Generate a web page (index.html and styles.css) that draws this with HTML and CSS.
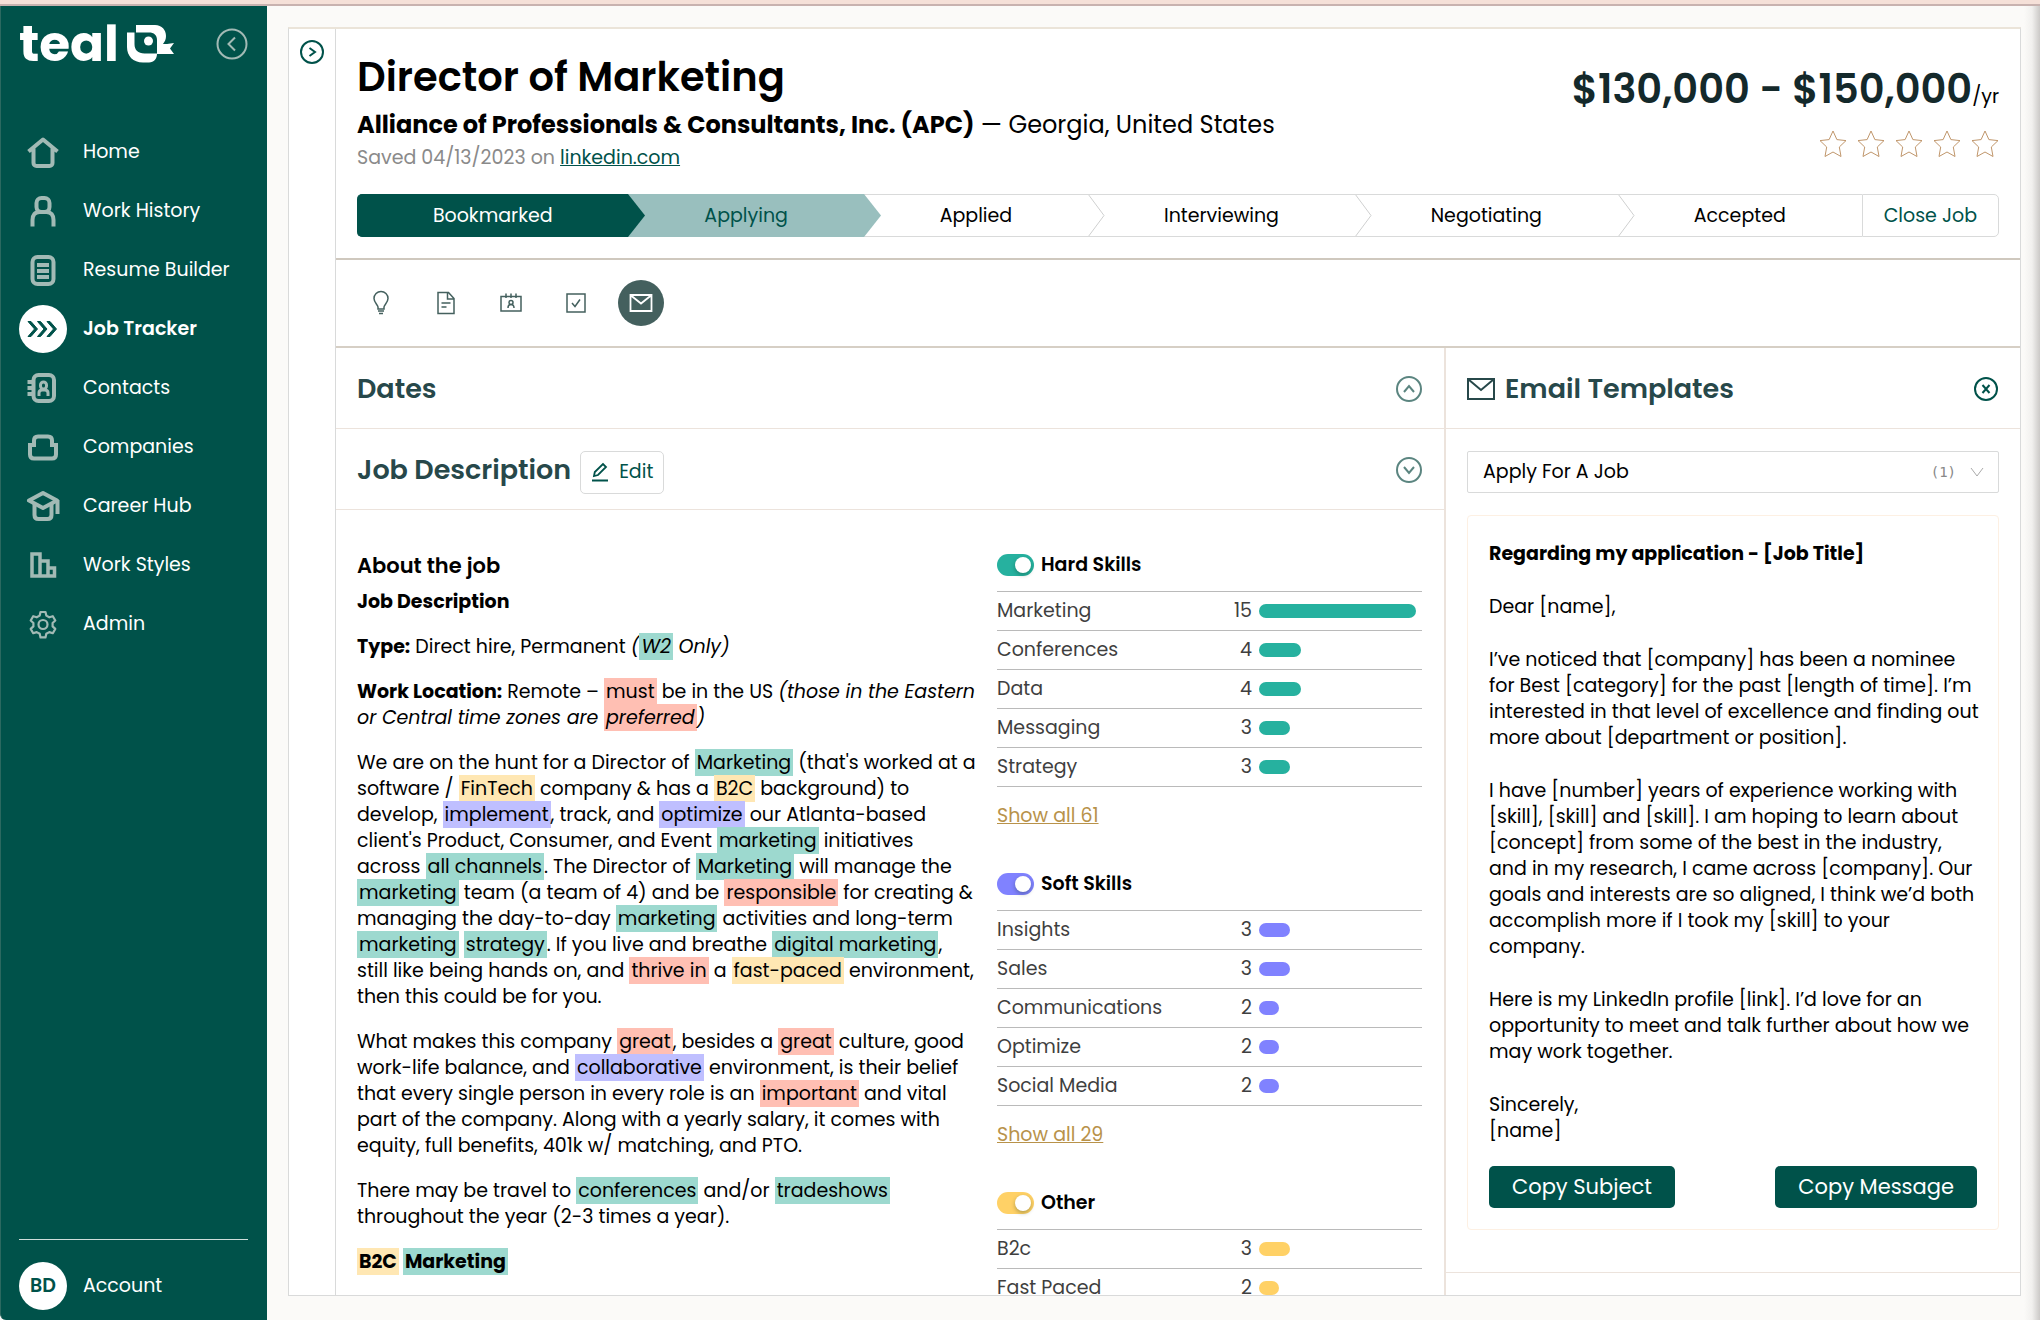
FILE: index.html
```html
<!DOCTYPE html>
<html lang="en">
<head>
    <meta charset="UTF-8">
    <meta name="viewport" content="width=device-width, initial-scale=1.0">
    <title>Teal - Job Tracker</title>
    <link rel="stylesheet" href="styles.css">
</head>
<body>
    <div class="top-bar"></div>
    <div class="app">
        <!-- Sidebar -->
        <aside class="sidebar">
            <div class="brand">
                <a href="#" class="logo">
                    <span>teal</span>
                    <svg width="48" height="38" viewBox="0 0 48 38" fill="none">
                        <path fill="#fff" d="M9 0h19c7 0 11 5 11 11 0 3-1 5.500-3 8h4l7-1-4 5.500 4 5.500H30V15c0-5-3-7.500-8-7.500H9z"/>
                        <path fill="#fff" d="M0 7.500h7.500V19c0 6 3.500 9.500 10 9.500H30c0 5.500-3 9-8 9h-6C6 37.500 0 31 0 22z"/>
                        <circle cx="21.500" cy="16" r="4.500" fill="#fff"/>
                    </svg>
                </a>
                <button class="collapse-btn" aria-label="Collapse menu">
                    <svg width="32" height="32" viewBox="0 0 32 32" fill="none" stroke="currentColor" stroke-width="2"><circle cx="16" cy="16" r="14.500"/><path d="M19 9.500 12.500 16l6.500 6.500"/></svg>
                </button>
            </div>
            <nav class="menu">
                <a href="#" class="menu-item">
                    <span class="menu-icon"><svg width="34" height="34" viewBox="0 0 34 34" fill="none" stroke="currentColor" stroke-width="4"><path d="M2.500 16.500 17 4.500l14.500 12M7.500 13v15a3 3 0 0 0 3 3h13a3 3 0 0 0 3-3V13" stroke-linejoin="round"/></svg></span>
                    Home
                </a>
                <a href="#" class="menu-item">
                    <span class="menu-icon"><svg width="34" height="34" viewBox="0 0 34 34" fill="none" stroke="currentColor" stroke-width="4"><rect x="10.500" y="4" width="13" height="14" rx="5"/><path d="M6.500 32.500V26c0-5 2.500-8 7-8h7c4.500 0 7 3 7 8v6.500"/></svg></span>
                    Work History
                </a>
                <a href="#" class="menu-item">
                    <span class="menu-icon"><svg width="34" height="34" viewBox="0 0 34 34" fill="none" stroke="currentColor" stroke-width="4"><rect x="6.500" y="4" width="21" height="27" rx="5"/><path d="M11 12h12M11 18h12M11 24h12"/></svg></span>
                    Resume Builder
                </a>
                <a href="#" class="menu-item active">
                    <span class="menu-icon"><svg width="34" height="34" viewBox="0 0 34 34" fill="none" stroke="currentColor" stroke-width="3"><path d="M2 9.500h3l6.500 7.500L5 24.500H2L8.500 17zM11.500 9.500h3L21 17l-6.500 7.500h-3L18 17zM21 9.500h3l6.500 7.500-6.500 7.500h-3l6.500-7.500z" fill="currentColor" stroke-width="1"/></svg></span>
                    Job Tracker
                </a>
                <a href="#" class="menu-item">
                    <span class="menu-icon"><svg width="34" height="34" viewBox="0 0 34 34" fill="none" stroke="currentColor" stroke-width="4"><rect x="7.500" y="4" width="20.500" height="26" rx="5"/><path d="M1.500 11h5M1.500 17h5M1.500 23h5"/><path stroke-width="3" d="M13 25v-3c0-2 1.500-3 3-3h3c1.500 0 3 1 3 3v3"/><rect x="14.500" y="11" width="6" height="7" rx="3" stroke-width="3"/></svg></span>
                    Contacts
                </a>
                <a href="#" class="menu-item">
                    <span class="menu-icon"><svg width="34" height="34" viewBox="0 0 34 34" fill="none" stroke="currentColor" stroke-width="4"><path d="M8 14v-3.500C8 8 9.500 6.500 12 6.500h10c2.500 0 4 1.500 4 4V14"/><path d="M10 15H4v9.500c0 2.500 1.500 4 4 4h18c2.500 0 4-1.500 4-4V15h-6"/></svg></span>
                    Companies
                </a>
                <a href="#" class="menu-item">
                    <span class="menu-icon"><svg width="34" height="34" viewBox="0 0 34 34" fill="none" stroke="currentColor" stroke-width="4" stroke-linejoin="round"><path d="M3 11.500 17 4l14 7.500L17 19z"/><path d="M8.500 15v11c0 2.500 1.500 4 4 4h9c2.500 0 4-1.500 4-4V15M31.500 11v14"/></svg></span>
                    Career Hub
                </a>
                <a href="#" class="menu-item">
                    <span class="menu-icon"><svg width="34" height="34" viewBox="0 0 34 34" fill="none" stroke="currentColor" stroke-width="3.500"><path d="M6 6h8v22H6zM14 13h8v15h-8zM22 20h6.500v8H22z"/></svg></span>
                    Work Styles
                </a>
                <a href="#" class="menu-item">
                    <span class="menu-icon"><svg width="34" height="34" viewBox="0 0 34 34" fill="none" stroke="currentColor" stroke-width="2.200" stroke-linejoin="round"><path d="M14.500 5h5l.8 3.600 3 1.700 3.500-1.100 2.500 4.300-2.700 2.500v3.400l2.700 2.500-2.500 4.300-3.500-1.100-3 1.700-.8 3.600h-5l-.8-3.600-3-1.700-3.500 1.100-2.500-4.300 2.700-2.500V16l-2.700-2.500 2.500-4.300 3.500 1.100 3-1.700z"/><circle cx="17" cy="17.500" r="4.500"/></svg></span>
                    Admin
                </a>
            </nav>
            <a href="#" class="account">
                <span class="avatar">BD</span>
                Account
            </a>
        </aside>

        <!-- Job detail -->
        <main class="content">
            <div class="rail">
                <button class="icon-btn" aria-label="Expand job list">
                    <svg width="26" height="26" viewBox="0 0 26 26" fill="none" stroke="currentColor" stroke-width="2"><circle cx="13" cy="13" r="11"/><path d="m10.500 9 5.500 4-5.500 4"/></svg>
                </button>
            </div>
            <div class="job">
                <header class="job-header">
                    <div class="job-top">
                        <div>
                            <h1>Director of Marketing</h1>
                            <p class="company"><strong>Alliance of Professionals &amp; Consultants, Inc. (APC)</strong> — Georgia, United States</p>
                            <p class="saved">Saved 04/13/2023 on <a href="#">linkedin.com</a></p>
                        </div>
                        <div class="job-side">
                            <p class="salary"><strong>$130,000 - $150,000</strong><span>/yr</span></p>
                            <div class="stars">
                                <button aria-label="1 star"><svg width="28" height="28" viewBox="0 0 28 28"><path d="m14 1 3.900 8.600 9.100 1-6.700 6.400 1.700 9.500L14 22l-8 4.500L7.700 17 1 10.600l9.100-1z"/></svg></button>
                                <button aria-label="2 stars"><svg width="28" height="28" viewBox="0 0 28 28"><path d="m14 1 3.900 8.600 9.100 1-6.700 6.400 1.700 9.500L14 22l-8 4.500L7.700 17 1 10.600l9.100-1z"/></svg></button>
                                <button aria-label="3 stars"><svg width="28" height="28" viewBox="0 0 28 28"><path d="m14 1 3.900 8.600 9.100 1-6.700 6.400 1.700 9.500L14 22l-8 4.500L7.700 17 1 10.600l9.100-1z"/></svg></button>
                                <button aria-label="4 stars"><svg width="28" height="28" viewBox="0 0 28 28"><path d="m14 1 3.900 8.600 9.100 1-6.700 6.400 1.700 9.500L14 22l-8 4.500L7.700 17 1 10.600l9.100-1z"/></svg></button>
                                <button aria-label="5 stars"><svg width="28" height="28" viewBox="0 0 28 28"><path d="m14 1 3.900 8.600 9.100 1-6.700 6.400 1.700 9.500L14 22l-8 4.500L7.700 17 1 10.600l9.100-1z"/></svg></button>
                            </div>
                        </div>
                    </div>
                    <div class="stages">
                        <button class="stage done">Bookmarked<svg class="arrow" viewBox="0 0 17 43" preserveAspectRatio="none"><path d="M0 0 17 21.500 0 43z"/></svg></button>
                        <button class="stage current">Applying<svg class="arrow" viewBox="0 0 17 43" preserveAspectRatio="none"><path d="M0 0 17 21.500 0 43z"/></svg></button>
                        <button class="stage">Applied<svg class="arrow" viewBox="0 0 17 43" preserveAspectRatio="none"><path d="M0 0 16 21.500 0 43"/></svg></button>
                        <button class="stage">Interviewing<svg class="arrow" viewBox="0 0 17 43" preserveAspectRatio="none"><path d="M0 0 16 21.500 0 43"/></svg></button>
                        <button class="stage">Negotiating<svg class="arrow" viewBox="0 0 17 43" preserveAspectRatio="none"><path d="M0 0 16 21.500 0 43"/></svg></button>
                        <button class="stage">Accepted</button>
                        <button class="close-job">Close Job</button>
                    </div>
                </header>

                <div class="toolbar">
                    <button aria-label="Tips"><svg width="26" height="26" viewBox="0 0 26 26" fill="none" stroke="currentColor" stroke-width="1.500"><path d="M10 19v-2c0-2-4-4.500-4-8.500a7 7 0 0 1 14 0c0 4-4 6.500-4 8.500v2zM10 21h6M11 23.500h4"/></svg></button>
                    <button aria-label="Notes"><svg width="26" height="26" viewBox="0 0 26 26" fill="none" stroke="currentColor" stroke-width="1.500"><path d="M5 2.500h10.500l5.500 6V23.500H5zM14.500 2.500v6.500H21M8.500 13h9M8.500 17h5"/></svg></button>
                    <button aria-label="Contacts"><svg width="26" height="26" viewBox="0 0 26 26" fill="none" stroke="currentColor" stroke-width="1.500"><path d="M3 6.500h20v14.500H3zM8 3.500v4.500M13 3.500v4.500M18 3.500v4.500M10 18c0-3 1-3.500 3-3.500s3 .5 3 3.500"/><circle cx="13" cy="12.500" r="2"/></svg></button>
                    <button aria-label="Tasks"><svg width="26" height="26" viewBox="0 0 26 26" fill="none" stroke="currentColor" stroke-width="1.500"><path d="M4 4h18v18H4zM9 13l3 3.500L17 9.500"/></svg></button>
                    <button class="active" aria-label="Email templates"><svg width="26" height="26" viewBox="0 0 26 26" fill="none" stroke="currentColor" stroke-width="1.800"><path d="M2.500 5h21v16h-21zM3 5.500l10 8 10-8"/></svg></button>
                </div>

                <div class="panels">
                    <div class="details">
                        <section class="section-head">
                            <h2>Dates</h2>
                            <button class="icon-btn muted" aria-label="Expand dates">
                                <svg width="28" height="28" viewBox="0 0 28 28" fill="none" stroke="currentColor" stroke-width="2"><circle cx="14" cy="14" r="12"/><path d="m9 17 5-6 5 6"/></svg>
                            </button>
                        </section>
                        <section class="section-head">
                            <h2>Job Description</h2>
                            <button class="edit-btn">
                                <svg width="18" height="20" viewBox="0 0 18 20" fill="none" stroke="currentColor" stroke-width="1.800"><path d="M1 18.500h16M3 14l.8-4L12 2l3 3-8 8z"/></svg>
                                Edit
                            </button>
                            <button class="icon-btn muted" aria-label="Collapse job description">
                                <svg width="28" height="28" viewBox="0 0 28 28" fill="none" stroke="currentColor" stroke-width="2"><circle cx="14" cy="14" r="12"/><path d="m9 11 5 6 5-6"/></svg>
                            </button>
                        </section>
                        <div class="description">
                            <article class="posting">
                                <h3>About the job</h3>
                                <p class="lead"><strong>Job Description</strong></p>
                                <p><strong>Type:</strong> Direct hire, Permanent <em>(<mark class="hard">W2</mark> Only)</em></p>
                                <p><strong>Work Location:</strong> Remote – <mark class="key">must</mark> be in the US <em>(those in the Eastern or Central time zones are <mark class="key">preferred</mark>)</em></p>
                                <p>We are on the hunt for a Director of <mark class="hard">Marketing</mark> (that's worked at a software / <mark class="other">FinTech</mark> company &amp; has a <mark class="other">B2C</mark> background) to develop, <mark class="soft">implement</mark>, track, and <mark class="soft">optimize</mark> our Atlanta-based client's Product, Consumer, and Event <mark class="hard">marketing</mark> initiatives across <mark class="hard">all channels</mark>. The Director of <mark class="hard">Marketing</mark> will manage the <mark class="hard">marketing</mark> team (a team of 4) and be <mark class="key">responsible</mark> for creating &amp; managing the day-to-day <mark class="hard">marketing</mark> activities and long-term <mark class="hard">marketing</mark> <mark class="hard">strategy</mark>. If you live and breathe <mark class="hard">digital marketing</mark>, still like being hands on, and <mark class="key">thrive in</mark> a <mark class="other">fast-paced</mark> environment, then this could be for you.</p>
                                <p>What makes this company <mark class="key">great</mark>, besides a <mark class="key">great</mark> culture, good work-life balance, and <mark class="soft">collaborative</mark> environment, is their belief that every single person in every role is an <mark class="key">important</mark> and vital part of the company. Along with a yearly salary, it comes with equity, full benefits, 401k w/ matching, and PTO.</p>
                                <p>There may be travel to <mark class="hard">conferences</mark> and/or <mark class="hard">tradeshows</mark> throughout the year (2-3 times a year).</p>
                                <p><strong><mark class="other">B2C</mark> <mark class="hard">Marketing</mark></strong></p>
                            </article>

                            <div class="skills">
                                <section class="skill-group hard">
                                    <label><input type="checkbox" class="switch" checked> Hard Skills</label>
                                    <table>
                                        <tr><td>Marketing</td><td class="count">15</td><td class="bar-cell"><div class="bar" style="width: 100%"></div></td></tr>
                                        <tr><td>Conferences</td><td class="count">4</td><td class="bar-cell"><div class="bar" style="width: 27%"></div></td></tr>
                                        <tr><td>Data</td><td class="count">4</td><td class="bar-cell"><div class="bar" style="width: 27%"></div></td></tr>
                                        <tr><td>Messaging</td><td class="count">3</td><td class="bar-cell"><div class="bar" style="width: 20%"></div></td></tr>
                                        <tr><td>Strategy</td><td class="count">3</td><td class="bar-cell"><div class="bar" style="width: 20%"></div></td></tr>
                                    </table>
                                    <a href="#">Show all 61</a>
                                </section>
                                <section class="skill-group soft">
                                    <label><input type="checkbox" class="switch" checked> Soft Skills</label>
                                    <table>
                                        <tr><td>Insights</td><td class="count">3</td><td class="bar-cell"><div class="bar" style="width: 20%"></div></td></tr>
                                        <tr><td>Sales</td><td class="count">3</td><td class="bar-cell"><div class="bar" style="width: 20%"></div></td></tr>
                                        <tr><td>Communications</td><td class="count">2</td><td class="bar-cell"><div class="bar" style="width: 13%"></div></td></tr>
                                        <tr><td>Optimize</td><td class="count">2</td><td class="bar-cell"><div class="bar" style="width: 13%"></div></td></tr>
                                        <tr><td>Social Media</td><td class="count">2</td><td class="bar-cell"><div class="bar" style="width: 13%"></div></td></tr>
                                    </table>
                                    <a href="#">Show all 29</a>
                                </section>
                                <section class="skill-group other">
                                    <label><input type="checkbox" class="switch" checked> Other</label>
                                    <table>
                                        <tr><td>B2c</td><td class="count">3</td><td class="bar-cell"><div class="bar" style="width: 20%"></div></td></tr>
                                        <tr><td>Fast Paced</td><td class="count">2</td><td class="bar-cell"><div class="bar" style="width: 13%"></div></td></tr>
                                    </table>
                                </section>
                            </div>
                        </div>
                    </div>

                    <!-- Email templates -->
                    <div class="email">
                        <div class="section-head">
                            <svg class="mail-icon" width="28" height="22" viewBox="0 0 28 22" fill="none" stroke="currentColor" stroke-width="2"><path d="M1 1h26v20H1zM1.500 1.500 14 12 26.500 1.500"/></svg>
                            <h2>Email Templates</h2>
                            <button class="icon-btn" aria-label="Close email templates">
                                <svg width="26" height="26" viewBox="0 0 26 26" fill="none" stroke="currentColor" stroke-width="2"><circle cx="13" cy="13" r="11"/><path d="m9.500 9 7 8M16.500 9l-7 8"/></svg>
                            </button>
                        </div>
                        <div class="email-body">
                            <div class="template-select">
                                <select aria-label="Email template">
                                    <option>Apply For A Job</option>
                                </select>
                                <span class="template-count">(1) <svg width="14" height="10" viewBox="0 0 14 10" fill="none" stroke="#aaa"><path d="m1 1 6 8 6-8"/></svg></span>
                            </div>
                            <div class="template">
                                <p><strong>Regarding my application - [Job Title]</strong></p>
                                <p>Dear [name],</p>
                                <p>I’ve noticed that [company] has been a nominee for Best [category] for the past [length of time]. I’m interested in that level of excellence and finding out more about [department or position].</p>
                                <p>I have [number] years of experience working with [skill], [skill] and [skill]. I am hoping to learn about [concept] from some of the best in the industry, and in my research, I came across [company]. Our goals and interests are so aligned, I think we’d both accomplish more if I took my [skill] to your company.</p>
                                <p>Here is my LinkedIn profile [link]. I’d love for an opportunity to meet and talk further about how we may work together.</p>
                                <p>Sincerely,<br>[name]</p>
                                <div class="template-actions">
                                    <button>Copy Subject</button>
                                    <button>Copy Message</button>
                                </div>
                            </div>
                        </div>
                    </div>
                </div>
            </div>
        </main>
    </div>
</body>
</html>
```
FILE: styles.css
```css
* {
    box-sizing: border-box;
}
body {
    margin: 0;
    height: 100vh;
    display: flex;
    flex-direction: column;
    overflow: hidden;
    font-family: Poppins, Inter, "Open Sans", sans-serif;
    font-size: 19px;
    line-height: 26px;
    color: #000;
    background-color: #fbfaf8;
}
h1, h2, h3, p {
    margin: 0;
}
button {
    font: inherit;
    color: #00524a;
    background: none;
    border: none;
    padding: 0;
    cursor: pointer;
}
svg {
    display: block;
    flex: none;
}
.top-bar {
    flex: none;
    height: 6px;
    background-color: #f5e0d8;
    border-bottom: 2px solid #c8b2af;
}
.app {
    flex: 1;
    min-height: 0;
    display: flex;
    background: linear-gradient(to left, #cbc9c7, #f1f0ee 8px, #fbfaf8 16px);
}

/* Sidebar */
.sidebar {
    flex: none;
    width: 267px;
    display: flex;
    flex-direction: column;
    padding: 18px 19px 11px 18px;
    background-color: #00524a;
    border-left: 1px solid #2b6960;
    border-bottom-left-radius: 6px;
}
.brand {
    display: flex;
    justify-content: space-between;
    align-items: center;
    height: 40px;
}
.logo {
    display: flex;
    align-items: center;
    gap: 8px;
    color: #fff;
    font-size: 50px;
    font-weight: 700;
    line-height: 40px;
    text-decoration: none;
}
.collapse-btn {
    color: #a2bab5;
}
.menu {
    display: flex;
    flex-direction: column;
    gap: 11px;
    margin-top: 64px;
}
.menu-item, .account {
    display: flex;
    align-items: center;
    gap: 16px;
    height: 48px;
    color: #fff;
    text-decoration: none;
}
.menu-icon {
    width: 48px;
    height: 48px;
    display: flex;
    align-items: center;
    justify-content: center;
    color: #a2bab5;
}
.menu-item.active {
    font-weight: 600;
}
.menu-item.active .menu-icon {
    border-radius: 50%;
    background-color: #fff;
    color: #00524a;
}
.account {
    margin-top: auto;
    height: 70px;
    padding-top: 22px;
    border-top: 1px solid #cfdedb;
}
.avatar {
    width: 48px;
    height: 48px;
    border-radius: 50%;
    background-color: #fff;
    color: #00524a;
    font-weight: 600;
    line-height: 48px;
    text-align: center;
}

/* Job card */
.content {
    flex: 1;
    min-width: 0;
    display: flex;
    margin: 21px 19px 24px 21px;
    background-color: #fff;
    border: 1px solid #d9dada;
    border-top: 2px solid #ebe4d9;
}
.rail {
    flex: none;
    width: 47px;
    padding: 10px 0;
    border-right: 1px solid #d9dada;
}
.rail .icon-btn {
    margin: 0 auto;
}
.icon-btn {
    display: block;
    color: #00524a;
}
.icon-btn.muted {
    color: #5b8580;
}
.job {
    flex: 1;
    min-width: 0;
    display: flex;
    flex-direction: column;
}
.job-header {
    padding: 21px;
    border-bottom: 2px solid #cfc8be;
}
.job-top {
    display: flex;
    justify-content: space-between;
}
h1 {
    font-size: 40px;
    font-weight: 600;
    line-height: 54px;
}
.company {
    margin-top: 5px;
    font-size: 24px;
    line-height: 32px;
}
.saved {
    margin-top: 2px;
    line-height: 30px;
    color: #8a8a8a;
}
.saved a {
    color: #00524a;
}
.job-side {
    display: flex;
    flex-direction: column;
    align-items: flex-end;
    padding-top: 12px;
}
.salary {
    line-height: 54px;
}
.salary strong {
    font-size: 40px;
    font-weight: 600;
    color: #14292b;
}
.stars {
    display: flex;
    gap: 10px;
    margin-top: 6px;
}
.stars svg {
    fill: none;
    stroke: #c0966b;
}
.stages {
    display: flex;
    height: 43px;
    margin-top: 21px;
}
.stage, .close-job {
    position: relative;
    color: #000;
    border: solid #d9dada;
    border-width: 1px 0;
}
.stage {
    flex: 1 1 auto;
}
.stage.done {
    z-index: 2;
    color: #fff;
    background-color: #00524a;
    border-color: #00524a;
    border-radius: 5px 0 0 5px;
}
.stage.current {
    z-index: 1;
    color: #00524a;
    background-color: #99bfbe;
    border-color: #99bfbe;
}
.arrow {
    position: absolute;
    top: -1px;
    right: -17px;
    width: 17px;
    height: 43px;
    fill: #fff;
    stroke: #cfd0d0;
}
.done .arrow {
    fill: #00524a;
    stroke: none;
}
.current .arrow {
    fill: #99bfbe;
    stroke: none;
}
.close-job {
    padding: 0 21px;
    color: #00524a;
    border-width: 1px;
    border-radius: 0 5px 5px 0;
}
.toolbar {
    display: flex;
    align-items: center;
    gap: 19px;
    height: 88px;
    padding-left: 22px;
    border-bottom: 2px solid #d6cfc5;
}
.toolbar button {
    width: 46px;
    height: 46px;
    display: flex;
    align-items: center;
    justify-content: center;
    border-radius: 50%;
    color: #44605e;
}
.toolbar .active {
    color: #fff;
    background-color: #44605e;
}

/* Panels under the toolbar */
.panels {
    flex: 1;
    min-height: 0;
    display: flex;
}
.details {
    flex: 1;
    min-width: 0;
    overflow: hidden;
}
.section-head {
    display: flex;
    align-items: center;
    height: 81px;
    padding: 2px 21px 0;
    border-bottom: 1px solid #ece3dc;
}
h2 {
    font-size: 27px;
    font-weight: 600;
    line-height: 40px;
    color: #27484a;
}
.section-head .icon-btn {
    margin-left: auto;
}
.edit-btn {
    display: flex;
    align-items: center;
    gap: 10px;
    height: 43px;
    margin: 4px 0 0 9px;
    padding: 0 10px;
    border: 1px solid #d9dada;
    border-radius: 5px;
}
.description {
    display: flex;
    justify-content: space-between;
    gap: 20px;
    padding: 43px 22px 0 21px;
}
.posting {
    flex: 1;
    min-width: 0;
}
.posting p {
    margin-bottom: 19px;
}
h3 {
    font-size: 21px;
    font-weight: 600;
    line-height: 26px;
}
.posting .lead {
    margin-top: 10px;
}
mark {
    padding: 0 2px;
    color: inherit;
}
mark.hard {
    background-color: #9dd9cf;
}
mark.soft {
    background-color: #bfbfff;
}
mark.other {
    background-color: #ffe7b3;
}
mark.key {
    background-color: #ffbfb3;
}
.skills {
    flex: none;
    width: 425px;
    margin-top: -1px;
}
.skill-group {
    margin-bottom: 42px;
    --tone: #26b19f;
}
.skill-group.soft {
    --tone: #8082ff;
}
.skill-group.other {
    --tone: #ffd166;
}
.skill-group label {
    display: flex;
    align-items: center;
    gap: 7px;
    font-weight: 600;
}
.switch {
    appearance: none;
    width: 37px;
    height: 22px;
    margin: 0;
    padding: 3px;
    border-radius: 11px;
    background-color: var(--tone);
}
.switch::before {
    content: "";
    display: block;
    width: 16px;
    height: 16px;
    margin-left: auto;
    border-radius: 50%;
    background-color: #fff;
    box-shadow: 0 2px 4px rgba(0, 35, 11, 0.3);
}
.skill-group table {
    width: 100%;
    margin: 13px 0 16px;
    border-collapse: collapse;
    color: #3f3f3f;
}
.skill-group td {
    height: 39px;
    padding: 0;
    border-top: 1px solid #bababa;
    border-bottom: 1px solid #bababa;
}
.skill-group .count {
    width: 60px;
    text-align: right;
}
.skill-group .bar-cell {
    width: 170px;
    padding: 0 6px 0 7px;
}
.bar {
    height: 14px;
    border-radius: 7px;
    background-color: var(--tone);
}
.skill-group a {
    color: #b8924a;
}

/* Email panel */
.email {
    flex: none;
    width: 576px;
    border-left: 2px solid #ece3dc;
}
.email h2 {
    margin-left: 10px;
}
.mail-icon {
    color: #27484a;
}
.email-body {
    padding: 22px 21px 42px;
    border-bottom: 1px solid #ece3dc;
}
.template-select {
    position: relative;
}
.template-select select {
    display: block;
    width: 100%;
    height: 42px;
    padding: 0 15px;
    appearance: none;
    font: inherit;
    color: #000;
    background-color: #fff;
    border: 1px solid #d9dada;
    border-radius: 2px;
}
.template-count {
    position: absolute;
    top: 8px;
    right: 15px;
    display: flex;
    align-items: center;
    gap: 14px;
    font-family: "DejaVu Sans Mono", monospace;
    font-size: 14px;
    color: #888;
    pointer-events: none;
}
.template {
    margin-top: 22px;
    padding: 25px 14px 21px 21px;
    border: 1px solid #fdf0e3;
    border-radius: 4px;
}
.template p {
    margin-bottom: 27px;
}
.template-actions {
    display: flex;
    justify-content: space-between;
    margin-top: -5px;
    padding-right: 7px;
}
.template-actions button {
    height: 42px;
    padding: 0 23px;
    border-radius: 5px;
    font-size: 21px;
    color: #fff;
    background-color: #00524a;
}
```
